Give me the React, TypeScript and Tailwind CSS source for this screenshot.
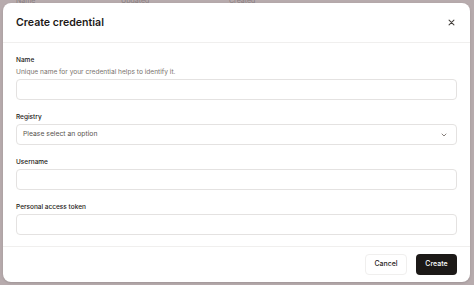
import { useState } from 'react'

const font = { fontFamily: 'Inter, "Noto Sans", sans-serif' }

function Field({ label, hint, children }: { label: string; hint?: string; children: React.ReactNode }) {
  return (
    <div className="flex flex-col">
      <label className="text-[6.5px] leading-[12px] font-medium text-[#1c1917]">{label}</label>
      {hint && <p className="text-[6.6px] leading-[12px] text-[#78716c]">{hint}</p>}
      <div className="mt-px flex">{children}</div>
    </div>
  )
}

function TextInput({ value, onChange }: { value: string; onChange: (v: string) => void }) {
  return (
    <input
      value={value}
      onChange={(e) => onChange(e.target.value)}
      className="block h-[21px] w-full rounded-[4px] border border-[#e4e2e1] bg-white px-[6px] text-[7px] outline-none"
    />
  )
}

export default function App() {
  const [name, setName] = useState('')
  const [user, setUser] = useState('')
  const [token, setToken] = useState('')

  return (
    <div className="relative h-[285px] w-[474px] overflow-hidden bg-[#b7abad]" style={font}>
      {/* dimmed page behind the dialog */}
      <div className="-mt-[3px] flex text-[7px] leading-[8px] text-[#8a8082]">
        <span className="ml-[16px] w-[105px]">Name</span>
        <span className="w-[108px]">Updated</span>
        <span>Created</span>
      </div>

      <div className="absolute left-[3px] top-[3px] flex h-[279px] w-[467px] flex-col rounded-[8px] bg-white shadow-sm">
        <div className="flex h-[40px] shrink-0 items-center justify-between border-b border-[#f0efee] px-[13px]">
          <h2 className="text-[10.6px] font-semibold text-[#1c1917]">Create credential</h2>
          <button className="mr-[2px] text-[#44403c]">
            <svg width="7" height="7" viewBox="0 0 10 10" fill="none" stroke="currentColor" strokeWidth="1.5" strokeLinecap="round">
              <path d="M1.5 1.5l7 7M8.5 1.5l-7 7" />
            </svg>
          </button>
        </div>

        <div className="flex flex-1 flex-col gap-[11px] border-b border-[#f0efee] px-[13px] pt-[11px]">
          <Field label="Name" hint="Unique name for your credential helps to identify it.">
            <TextInput value={name} onChange={setName} />
          </Field>
          <Field label="Registry">
            <div className="flex h-[21px] w-full items-center justify-between rounded-[4px] border border-[#e4e2e1] bg-white pl-[6px] pr-[9px]">
              <span className="text-[6.8px] text-[#57534e]">Please select an option</span>
              <svg width="6" height="4" viewBox="0 0 6 4" fill="none" stroke="#78716c" strokeWidth="0.9" strokeLinecap="round" strokeLinejoin="round">
                <path d="M1 1l2 2 2-2" />
              </svg>
            </div>
          </Field>
          <Field label="Username">
            <TextInput value={user} onChange={setUser} />
          </Field>
          <Field label="Personal access token">
            <TextInput value={token} onChange={setToken} />
          </Field>
        </div>

        <div className="flex h-[35px] shrink-0 items-center justify-end gap-[9px] px-[13px]">
          <button className="h-[21px] w-[42px] rounded-[4px] border border-[#f0efee] bg-white text-[7px] font-medium text-[#292524]">
            Cancel
          </button>
          <button className="h-[21px] w-[41px] rounded-[4px] bg-[#1c1917] text-[7px] font-medium text-white">
            Create
          </button>
        </div>
      </div>
    </div>
  )
}
